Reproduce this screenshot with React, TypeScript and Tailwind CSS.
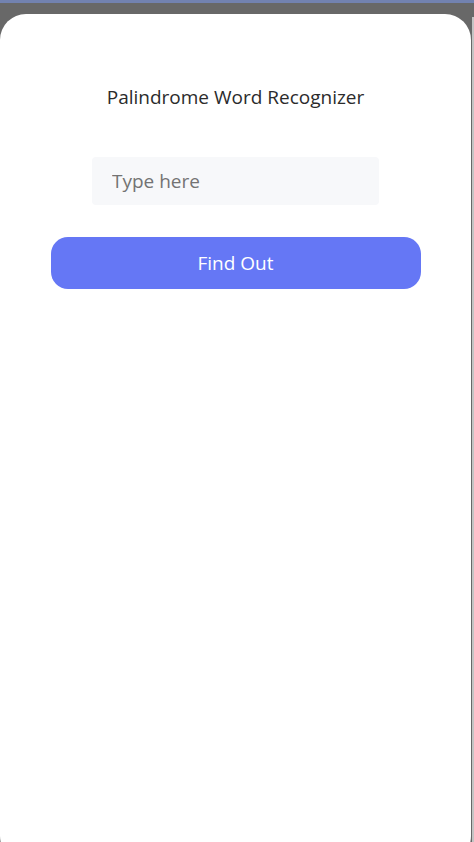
import React from "react";

export default function App() {
  return (
    <div className="relative h-[842px] w-[474px] overflow-hidden bg-[#686868]">
      <div className="h-[3px] bg-[#7282b0]" />
      <div className="flex h-[860px]">
        <div
          className="mt-[11px] flex h-[848px] w-[471px] flex-col items-center rounded-[26px] bg-white"
          style={{ fontFamily: '"Open Sans", "Noto Sans", sans-serif' }}
        >
          <h1 className="mt-[71px] text-[19px] font-normal leading-[25px] text-[#2b2b2b]">
            Palindrome Word Recognizer
          </h1>
          <input
            type="text"
            placeholder="Type here"
            className="mt-[47px] h-[48px] w-[287px] rounded-[4px] bg-[#f7f8fa] px-[20px] text-[19px] text-[#333] outline-none placeholder:text-[#737373]"
          />
          <button className="mt-[32px] h-[52px] w-[370px] rounded-[17px] bg-[#6577f5] text-[19px] text-white">
            Find Out
          </button>
        </div>
        <div className="mt-[14px] ml-[1px] w-[2px] bg-[#c4c4c4]" />
      </div>
    </div>
  );
}
